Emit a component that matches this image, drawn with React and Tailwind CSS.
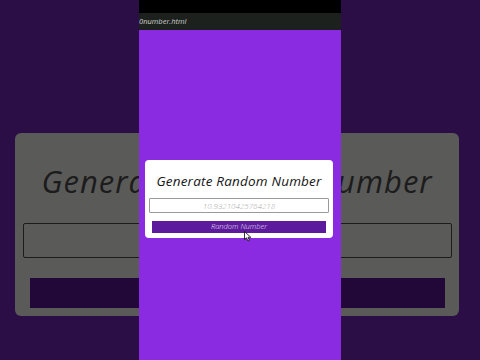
import React from "react";

export default function App() {
  const font = { fontFamily: '"Open Sans", "DejaVu Sans", sans-serif' };
  return (
    <div className="relative w-[480px] h-[360px] overflow-hidden bg-[#2c0e46]" style={font}>
      {/* blurred background copy */}
      <div className="pt-[133px] pl-[15px]">
        <div className="w-[444px] h-[183px] rounded-[6px] bg-[#5a5a58] flex flex-col items-center">
          <div className="mt-[28px] h-[40px] flex items-center text-[31px] italic text-[#1c1c1c] tracking-[1px]">
            Generate Random Number
          </div>
          <div className="mt-[22px] self-start ml-[8px] w-[429px] h-[35px] border border-[#1c1c1c] rounded-[2px]" />
          <div className="mt-[20px] self-start ml-[15px] w-[415px] h-[30px] bg-[#220839]" />
        </div>
      </div>

      {/* center phone strip */}
      <div className="absolute left-[139px] top-0 w-[202px] h-[360px] flex flex-col">
        <div className="h-[13px] bg-black" />
        <div className="h-[17px] bg-[#1d211d] flex items-center text-[7.5px] italic text-[#cfcfcf]">
          0number.html
        </div>
        <div className="flex-1 bg-[#8a2be2] pt-[130px] pl-[6px]">
          <div className="w-[188px] h-[78px] bg-white rounded-[4px] flex flex-col items-center">
            <div className="mt-[13px] h-[16px] flex items-center text-[13.5px] italic text-[#161616] tracking-[0.2px]">
              Generate Random Number
            </div>
            <div className="mt-[9px] w-[180px] h-[15px] border border-[#9a9a9a] rounded-[1px] flex items-center justify-center text-[8px] italic font-light text-[#a8a8a8]">
              10.93210425764218
            </div>
            <div className="mt-[8px] w-[174px] h-[12px] bg-[#5c1a9c] flex items-center justify-center text-[7.5px] italic font-light text-[#ece2f7]">
              Random Number
            </div>
          </div>
        </div>
      </div>

      {/* cursor */}
      <svg className="absolute left-[244px] top-[231px]" width="8" height="11" viewBox="0 0 8 11">
        <path d="M0.5 0.5 L0.5 8.5 L2.5 6.8 L4 10 L5.4 9.3 L4 6.3 L6.8 6.3 Z" fill="white" stroke="black" strokeWidth="0.8" />
      </svg>
    </div>
  );
}
